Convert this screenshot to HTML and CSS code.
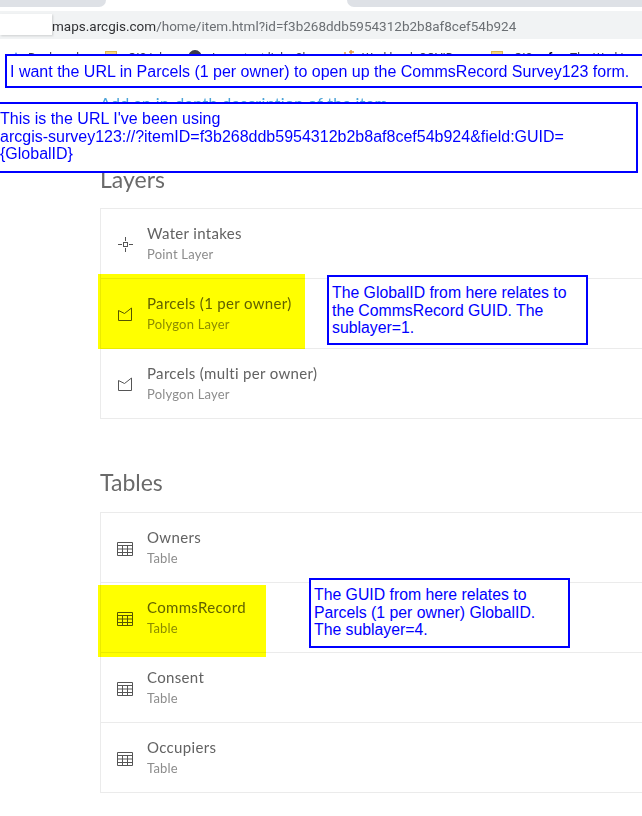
FILE: index.html
```html
<!DOCTYPE html>
<html lang="en">
<head>
<meta charset="utf-8">
<title>Item details</title>
<link rel="stylesheet" href="styles.css">
</head>
<body>
<div class="page">
  <header class="chrome">
    <div class="tabs">
      <div class="tab tab-left"></div>
      <div class="tab tab-right"></div>
    </div>
    <div class="address"><span class="domain">maps.arcgis.com</span>/home/item.html?id=f3b268ddb5954312b2b8af8cef54b924</div>
    <div class="bookmarks">
      <svg class="star" width="12" height="14" viewBox="0 0 12 14"><path d="M6 1l2 4 4 .5-3 3 .8 4.500L6 11l-3.800 2L3 8.500l-3-3L4 5z" fill="#4a86e8"/></svg>
      <span class="bm bm-first">Bookmarks</span>
      <span class="folder"></span><span class="bm bm-jobs">GIS jobs</span>
      <span class="dot"></span><span class="bm bm-links">Important links Sharep</span>
      <svg class="spark" width="16" height="16" viewBox="0 0 16 16"><path d="M5 2v8M1 6h8M11 0v5M9 2h5" stroke="#e49b3c" stroke-width="1.500"/></svg>
      <span class="bm bm-work">Workbook COVID</span>
      <span class="folder"></span><span class="bm bm-gis">GIS</span>
      <span class="bm bm-fyn">fyn</span><span class="bm">The Working</span>
    </div>
  </header>
  <main class="content">
    <a class="describe">Add an in-depth description of the item</a>
    <h2 class="heading heading-layers">Layers</h2>
    <ul class="list">
      <li class="row">
        <svg class="icon" viewBox="0 0 16 16"><path d="M8.500 0v4M8.500 11v4M1 7.500h4M12 7.500h4" fill="none" stroke="#555"/><rect x="6.500" y="5.500" width="4" height="4" fill="none" stroke="#555"/></svg>
        <div><div class="name">Water intakes</div><div class="type">Point Layer</div></div>
      </li>
      <li class="row">
        <svg class="icon" viewBox="0 0 16 16"><path d="M1.500 3.500L7.500 6.500L14.500 1V13.500H1.500Z" fill="none" stroke="#555"/></svg>
        <div><div class="name">Parcels (1 per owner)</div><div class="type">Polygon Layer</div></div>
      </li>
      <li class="row">
        <svg class="icon" viewBox="0 0 16 16"><path d="M1.500 3.500L7.500 6.500L14.500 1V13.500H1.500Z" fill="none" stroke="#555"/></svg>
        <div><div class="name">Parcels (multi per owner)</div><div class="type">Polygon Layer</div></div>
      </li>
    </ul>
    <h2 class="heading heading-tables">Tables</h2>
    <ul class="list">
      <li class="row">
        <svg class="icon" viewBox="0 0 16 16"><path d="M.500 1.500h15v13H.500zM.500 4.500h15M.500 8h15M.500 11.500h15M5.500 4.500v10M10.500 4.500v10" fill="none" stroke="#555"/></svg>
        <div><div class="name">Owners</div><div class="type">Table</div></div>
      </li>
      <li class="row">
        <svg class="icon" viewBox="0 0 16 16"><path d="M.500 1.500h15v13H.500zM.500 4.500h15M.500 8h15M.500 11.500h15M5.500 4.500v10M10.500 4.500v10" fill="none" stroke="#555"/></svg>
        <div><div class="name">CommsRecord</div><div class="type">Table</div></div>
      </li>
      <li class="row">
        <svg class="icon" viewBox="0 0 16 16"><path d="M.500 1.500h15v13H.500zM.500 4.500h15M.500 8h15M.500 11.500h15M5.500 4.500v10M10.500 4.500v10" fill="none" stroke="#555"/></svg>
        <div><div class="name">Consent</div><div class="type">Table</div></div>
      </li>
      <li class="row">
        <svg class="icon" viewBox="0 0 16 16"><path d="M.500 1.500h15v13H.500zM.500 4.500h15M.500 8h15M.500 11.500h15M5.500 4.500v10M10.500 4.500v10" fill="none" stroke="#555"/></svg>
        <div><div class="name">Occupiers</div><div class="type">Table</div></div>
      </li>
    </ul>
  </main>

  <div class="redact"></div>
  <div class="note note-want">I want the URL in Parcels (1 per owner) to open up the CommsRecord Survey123 form.</div>
  <div class="note note-url">This is the URL I've been using<br>arcgis-survey123://?itemID=f3b268ddb5954312b2b8af8cef54b924&amp;field:GUID=<br>{GlobalID}</div>
  <div class="mark mark-parcels"></div>
  <div class="mark mark-comms"></div>
  <div class="note note-global">The GlobalID from here relates to the CommsRecord GUID. The sublayer=1.</div>
  <div class="note note-guid">The GUID from here relates to Parcels (1 per owner) GlobalID. The sublayer=4.</div>
</div>
</body>
</html>
```
FILE: styles.css
```css
* { box-sizing: border-box; }
html, body { margin: 0; padding: 0; background: #fff; }
.page { position: relative; width: 642px; height: 816px; overflow: hidden; font-family: "Lato", "Liberation Sans", sans-serif; }

.chrome { height: 56px; }
.tabs { display: flex; justify-content: space-between; height: 7px; margin-bottom: 4px; }
.tab { background: #dee1e6; height: 7px; }
.tab-left { width: 106px; border-bottom-right-radius: 8px; }
.tab-right { width: 295px; border-bottom-left-radius: 8px; }
.address { height: 28px; background: #f1f3f4; padding-left: 52px; font: 13.500px/30px "Roboto", sans-serif; color: #6b6f73; white-space: nowrap; overflow: hidden; }
.domain { color: #303134; }
.bookmarks { display: flex; align-items: flex-start; height: 4px; overflow: hidden; margin-top: 11px; padding-left: 10px; font: 12px/16px "Roboto", sans-serif; color: #444; white-space: nowrap; }
.star { flex: none; margin-top: 1px; }
.bm-first { margin-left: 6px; width: 77px; }
.folder { flex: none; width: 12px; height: 14px; margin-top: 1px; background: #f5d77b; border: 1px solid #d9b64f; margin-right: 11px; }
.bm-jobs { width: 60px; }
.dot { flex: none; width: 14px; height: 16px; border-radius: 50%; background: #3a3a4a; margin-right: 10px; }
.bm-links { width: 130px; }
.spark { flex: none; margin-right: 6px; margin-left: -2px; }
.bm-work { width: 129px; }
.bm-gis { width: 34px; }
.bm-fyn { width: 22px; font-weight: 700; color: #111; }

.content { padding-left: 100px; }
.describe { display: block; height: 10px; overflow: hidden; margin-top: 36px; font-size: 16px; line-height: 22px; letter-spacing: .3px; color: #4ba3d8; white-space: nowrap; }
.heading { margin: 0; font-weight: 400; font-size: 23px; line-height: 28px; color: #6a6a6a; }
.heading-layers { margin-top: 63px; }
.heading-tables { margin-top: 49px; }
.list { list-style: none; margin: 16px 0 0; padding: 0; width: 600px; border: 1px solid #ebebeb; }
.heading-layers + .list { margin-top: 15px; }
.row { display: flex; align-items: center; height: 70px; padding-left: 16px; border-top: 1px solid #ebebeb; }
.row:first-child { border-top: 0; height: 69px; }
.icon { flex: none; width: 16px; height: 16px; margin-right: 14px; margin-top: 3px; }
.name { font-size: 15px; line-height: 20px; letter-spacing: .33px; color: #626262; }
.type { font-size: 13px; line-height: 20px; margin-top: 1px; letter-spacing: .2px; color: #8c8c8c; }

.redact { position: absolute; left: 0; top: 14px; width: 52px; height: 21px; background: #fff; box-shadow: 1px 1px 2px rgba(0,0,0,.15); }
.note { position: absolute; background: #fff; border: 2px solid #0000ff; color: #0000ff; font-family: "Liberation Sans", Arial, sans-serif; font-size: 16px; line-height: 17.500px; }
.note-want { left: 5px; top: 54px; width: 660px; height: 34px; padding: 7px 0 0 3px; white-space: nowrap; }
.note-url { left: -2px; top: 102px; width: 640px; height: 71px; padding: 6px 0 0 0; white-space: nowrap; }
.note-global { left: 327px; top: 275px; width: 261px; height: 70px; padding: 7px 4px 0 3px; font-size: 15.800px; }
.note-guid { left: 309px; top: 578px; width: 261px; height: 70px; padding: 6px 4px 0 3px; font-size: 15.800px; }
.mark { position: absolute; background: #ffff00; mix-blend-mode: multiply; }
.mark-parcels { left: 98px; top: 274px; width: 207px; height: 75px; }
.mark-comms { left: 98px; top: 585px; width: 168px; height: 72px; }
```
